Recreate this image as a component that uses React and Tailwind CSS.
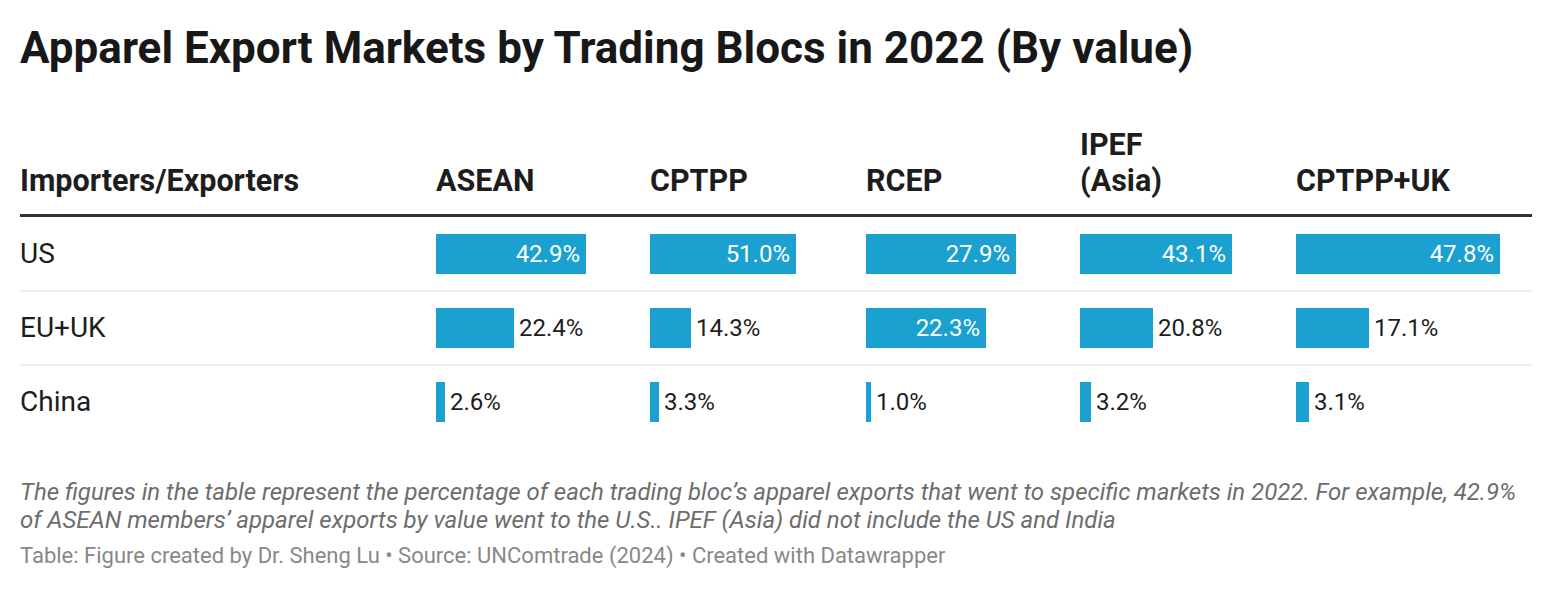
import React from 'react'

const scales = [3.5, 2.86, 5.38, 3.53, 4.27]

const rows = [
    { name: 'US', values: [42.9, 51.0, 27.9, 43.1, 47.8] },
    { name: 'EU+UK', values: [22.4, 14.3, 22.3, 20.8, 17.1] },
    { name: 'China', values: [2.6, 3.3, 1.0, 3.2, 3.1] },
]

const grid = 'grid grid-cols-[416px_214px_216px_214px_216px_1fr]'

function BarCell({ value, scale, inside }) {
    const width = Math.round(value * scale)
    return (
        <div className="flex items-center h-[40px]">
            <div className="h-full bg-[#1aa1cf] flex items-center justify-end shrink-0" style={{ width }}>
                {inside && <span className="text-white text-[24px] leading-none pr-[6px]">{value.toFixed(1)}%</span>}
            </div>
            {!inside && <span className="text-[#1d1d1d] text-[24px] leading-none pl-[5px]">{value.toFixed(1)}%</span>}
        </div>
    )
}

export default function App() {
    return (
        <div className="bg-white w-[1552px] h-[590px] px-[20px] font-['Roboto',sans-serif] text-[#1d1d1d] overflow-hidden">
            <h1 className="pt-[22px] text-[44px] leading-[52px] font-bold text-[#181818] whitespace-nowrap">
                Apparel Export Markets by Trading Blocs in 2022 (By value)
            </h1>

            {/* Table */}
            <div className="mt-[53px]">
                <div className={`${grid} items-end pb-[15px] border-b-[3px] border-[#333333] text-[30.5px] leading-[36px] font-bold`}>
                    <div>Importers/Exporters</div>
                    <div>ASEAN</div>
                    <div>CPTPP</div>
                    <div>RCEP</div>
                    <div>IPEF<br />(Asia)</div>
                    <div>CPTPP+UK</div>
                </div>
                <div className="pt-px">
                    {rows.map((row, i) => (
                        <div key={row.name} className={`${grid} items-center py-4 ${i < rows.length - 1 ? 'border-b-2 border-[#ececec]' : ''}`}>
                            <div className="text-[28px] leading-none">{row.name}</div>
                            {row.values.map((v, j) => (
                                <BarCell key={j} value={v} scale={scales[j]} inside={Math.round(v * scales[j]) > 100} />
                            ))}
                        </div>
                    ))}
                </div>
            </div>

            {/* Notes */}
            <p className="mt-[40px] text-[24px] leading-[28px] italic text-[#6d6d6d]">
                The figures in the table represent the percentage of each trading bloc’s apparel exports that went to specific markets in 2022. For example, 42.9% of ASEAN members’ apparel exports by value went to the U.S.. IPEF (Asia) did not include the US and India
            </p>
            <p className="mt-[9px] text-[22px] leading-[26px] text-[#888888]">
                Table: Figure created by Dr. Sheng Lu • Source: UNComtrade (2024) • Created with Datawrapper
            </p>
        </div>
    )
}
